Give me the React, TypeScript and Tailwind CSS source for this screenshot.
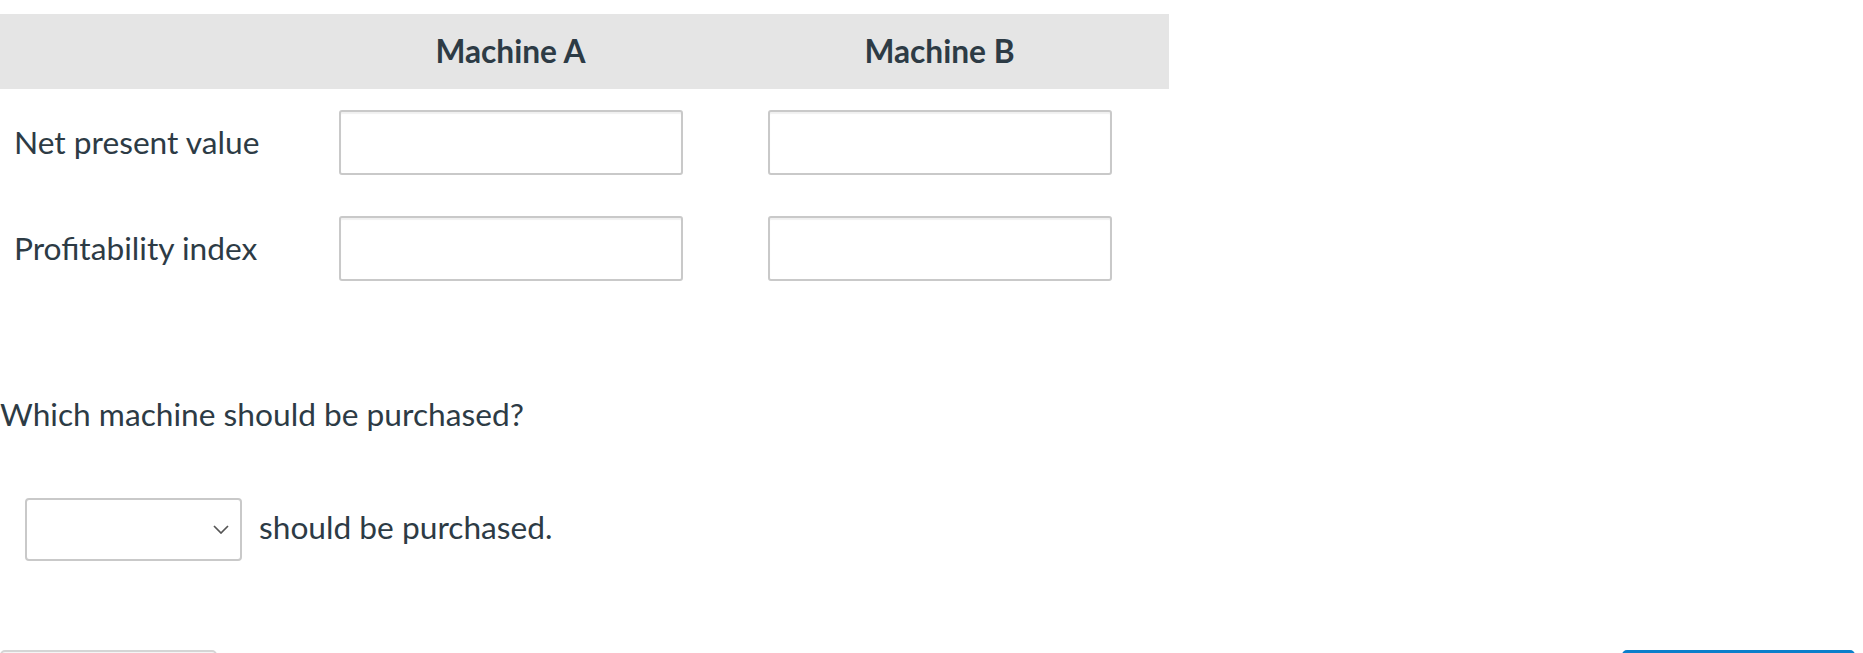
import React from "react";

const font = { fontFamily: "Lato, 'Noto Sans', sans-serif" };

function Box() {
  return (
    <div className="w-[344px] h-[65px] border-2 border-[#c9c9c9] rounded-[3px] bg-white shadow-[inset_0_2px_1px_rgba(0,0,0,0.06)]" />
  );
}

export default function App() {
  return (
    <div className="w-[1863px] h-[653px] bg-white overflow-hidden text-[#2d3b45] relative" style={font}>
      <div className="pt-[14px]">
        <div className="w-[1169px] h-[75px] bg-[#e5e5e5] grid grid-cols-[296px_429px_429px] items-center">
          <div />
          <div className="text-center font-bold text-[31.7px]">Machine A</div>
          <div className="text-center font-bold text-[31.7px]">Machine B</div>
        </div>
        <div className="w-[1169px] grid grid-cols-[296px_429px_429px] items-center pt-[21px] gap-y-[41px] text-[31.7px]">
          <div className="pl-[14px]">Net present value</div>
          <div className="flex justify-center"><Box /></div>
          <div className="flex justify-center"><Box /></div>
          <div className="pl-[14px]">Profitability index</div>
          <div className="flex justify-center"><Box /></div>
          <div className="flex justify-center"><Box /></div>
        </div>
      </div>
      <div className="mt-[115px] text-[31.7px] leading-[36px]">Which machine should be purchased?</div>
      <div className="mt-[66px] ml-[25px] flex items-center gap-[17px] text-[31.7px]">
        <div className="w-[217px] h-[63px] border-2 border-[#c9c9c9] rounded-[4px] bg-white flex items-center justify-end pr-[11px]">
          <svg width="16" height="9" viewBox="0 0 16 9" fill="none">
            <path d="M1 1l7 7 7-7" stroke="#555" strokeWidth="1.7" />
          </svg>
        </div>
        <span className="-mt-[3px]">should be purchased.</span>
      </div>
      <div className="absolute left-0 top-[650px] w-[217px] h-[40px] border-2 border-[#d5d5d5] rounded-[5px] bg-[#f5f5f5]" />
      <div className="absolute left-[1622px] top-[650px] w-[233px] h-[40px] rounded-[5px] bg-[#0a7fcb]" />
    </div>
  );
}
